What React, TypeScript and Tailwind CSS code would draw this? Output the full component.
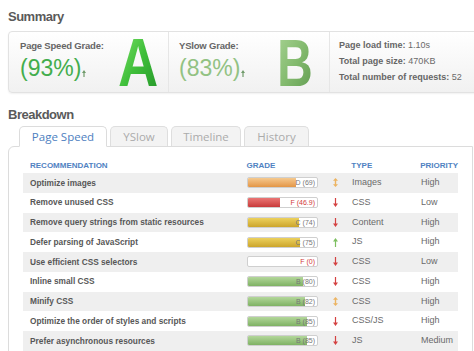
import React from 'react';

type Row = {
  name: string;
  grade: string;
  score: number;
  label: string;
  trend: 'up' | 'down' | 'both';
  type: string;
  priority: string;
};

const rows: Row[] = [
  { name: 'Optimize images', grade: 'D', score: 69, label: 'D (69)', trend: 'both', type: 'Images', priority: 'High' },
  { name: 'Remove unused CSS', grade: 'F', score: 46.9, label: 'F (46.9)', trend: 'down', type: 'CSS', priority: 'Low' },
  { name: 'Remove query strings from static resources', grade: 'C', score: 74, label: 'C (74)', trend: 'down', type: 'Content', priority: 'High' },
  { name: 'Defer parsing of JavaScript', grade: 'C', score: 75, label: 'C (75)', trend: 'up', type: 'JS', priority: 'High' },
  { name: 'Use efficient CSS selectors', grade: 'F', score: 0, label: 'F (0)', trend: 'down', type: 'CSS', priority: 'Low' },
  { name: 'Inline small CSS', grade: 'B', score: 80, label: 'B (80)', trend: 'down', type: 'CSS', priority: 'High' },
  { name: 'Minify CSS', grade: 'B', score: 82, label: 'B (82)', trend: 'both', type: 'CSS', priority: 'High' },
  { name: 'Optimize the order of styles and scripts', grade: 'B', score: 85, label: 'B (85)', trend: 'down', type: 'CSS/JS', priority: 'High' },
  { name: 'Prefer asynchronous resources', grade: 'B', score: 85, label: 'B (85)', trend: 'down', type: 'JS', priority: 'Medium' },
];

const fillClass: Record<string, string> = {
  D: 'bg-linear-to-b from-[#f5c98e] to-[#e39646]',
  F: 'bg-linear-to-b from-[#ea7575] to-[#c83a3a]',
  C: 'bg-linear-to-b from-[#ecd15c] to-[#cca52a]',
  B: 'bg-linear-to-b from-[#b3d79a] to-[#7fb264]',
};

// little trend arrows next to the grade bars
const Trend = ({ dir }: { dir: Row['trend'] }) => {
  if (dir === 'both')
    return (
      <svg width="5" height="9" viewBox="0 0 5 9">
        <path d="M2.5 0 L5 2.8 H3.2 V6.2 H5 L2.5 9 L0 6.2 H1.8 V2.8 H0 Z" fill="#ecb462" />
      </svg>
    );
  if (dir === 'up')
    return (
      <svg width="5" height="9" viewBox="0 0 5 9">
        <path d="M2.5 0 L5 3.6 H3.1 V9 H1.9 V3.6 H0 Z" fill="#7dbf60" />
      </svg>
    );
  return (
    <svg width="5" height="9" viewBox="0 0 5 9">
      <path d="M2.5 9 L5 5.4 H3.1 V0 H1.9 V5.4 H0 Z" fill="#d44242" />
    </svg>
  );
};

const SmallUp = () => (
  <svg width="4" height="7" viewBox="0 0 4 7" className="ml-[1px] mb-[4px]">
    <path d="M2 0 L4 3 H2.6 V7 H1.4 V3 H0 Z" fill="#6f9a6a" />
  </svg>
);

const App: React.FC = () => {
  return (
    <div className="w-[474px] h-[351px] overflow-hidden bg-white font-['Liberation_Sans',Arial,sans-serif] pl-2 pt-2">
      <h2 className="text-[13px] leading-[17px] font-bold tracking-[-0.5px] text-[#5a5a5a]">Summary</h2>

      {/* summary box */}
      <div className="mt-[6px] w-[475px] h-[62px] flex border border-[#e2e2e2] rounded-[4px] bg-linear-to-b from-[#ffffff] to-[#f1f1f1] shadow-[0_1px_2px_rgba(0,0,0,0.06)]">
        <div className="w-[160px] flex items-center pl-[11px] border-r border-[#e6e6e6]">
          <div className="w-[98px] self-start pt-[7.5px] flex flex-col">
            <span className="text-[9.5px] leading-[12px] font-bold text-[#666] tracking-[-0.2px]">Page Speed Grade:</span>
            <span className="mt-[3.5px] flex items-end text-[23px] leading-[26px] text-[#43ad4d]">
              (93%)<SmallUp />
            </span>
          </div>
          <span className="text-[68px] leading-none font-bold bg-linear-to-br from-[#7de46a] via-[#3fbf3a] to-[#24962a] bg-clip-text text-transparent scale-x-[0.82] origin-left">
            A
          </span>
        </div>
        <div className="w-[161px] flex items-center pl-[10px] border-r border-[#e6e6e6]">
          <div className="w-[98px] self-start pt-[7.5px] flex flex-col">
            <span className="text-[9.5px] leading-[12px] font-bold text-[#666] tracking-[-0.2px]">YSlow Grade:</span>
            <span className="mt-[3.5px] flex items-end text-[23px] leading-[26px] text-[#92c283]">
              (83%)<SmallUp />
            </span>
          </div>
          <span className="text-[67px] leading-none font-bold bg-linear-to-br from-[#a9d495] via-[#84bb6f] to-[#5f9a4f] bg-clip-text text-transparent scale-x-[0.74] origin-left">
            B
          </span>
        </div>
        <div className="pl-[9px] pt-[4.5px] flex flex-col text-[9px] leading-[16px] text-[#6a6a6a]">
          <span><b className="text-[#666]">Page load time:</b> 1.10s</span>
          <span><b className="text-[#666]">Total page size:</b> 470KB</span>
          <span><b className="text-[#666]">Total number of requests:</b> 52</span>
        </div>
      </div>

      <h2 className="mt-[12.5px] text-[13px] leading-[17px] font-bold tracking-[-0.5px] text-[#5a5a5a]">Breakdown</h2>

      {/* tabs */}
      <div className="mt-[3.5px] ml-[11px] flex gap-[3px] items-end font-['Open_Sans',sans-serif] text-[11.5px]">
        <div className="w-[88px] h-[21px] -mb-px flex items-center justify-center bg-white border border-b-white border-[#dcdcdc] rounded-t-[5px] text-[#4d80c0] relative z-10">
          Page Speed
        </div>
        <div className="w-[58px] h-[20px] flex items-center justify-center bg-[#f3f3f3] border border-b-0 border-[#dedede] rounded-t-[5px] text-[#ababab]">
          YSlow
        </div>
        <div className="w-[70px] h-[20px] flex items-center justify-center bg-[#f3f3f3] border border-b-0 border-[#dedede] rounded-t-[5px] text-[#ababab]">
          Timeline
        </div>
        <div className="w-[65px] h-[20px] flex items-center justify-center bg-[#f3f3f3] border border-b-0 border-[#dedede] rounded-t-[5px] text-[#ababab]">
          History
        </div>
      </div>

      {/* panel */}
      <div className="w-[465px] h-[220px] border border-[#dcdcdc] rounded-tl-[6px] px-[14px]">
        <div className="flex pl-[7px] pt-[14px] pb-[2px] text-[8px] leading-[10px] font-bold text-[#4f82c2]">
          <span className="w-[217px]">RECOMMENDATION</span>
          <span className="w-[105px]">GRADE</span>
          <span className="w-[69px]">TYPE</span>
          <span>PRIORITY</span>
        </div>
        {rows.map((r, i) => (
          <div
            key={r.name}
            className={`flex items-center h-[19.75px] pl-[7px] ${i % 2 === 0 ? 'bg-[#efefef]' : 'bg-white'}`}
          >
            <span className="w-[217px] text-[8.3px] font-bold text-[#575757]">{r.name}</span>
            <span className="w-[83px]">
              <span className="relative flex items-center justify-end w-[71px] h-[11px] border border-[#cfcfcf] bg-white rounded-[2px] overflow-hidden">
                <span
                  className={`absolute left-0 top-0 bottom-0 ${fillClass[r.grade]}`}
                  style={{ width: `${r.score}%` }}
                />
                <span className={`relative pr-[2px] text-[7px] leading-none ${r.grade === 'F' ? 'text-[#d23a3a]' : 'text-[#777]'}`}>
                  {r.label}
                </span>
              </span>
            </span>
            <span className="w-[22px] flex pl-[3px]">
              <Trend dir={r.trend} />
            </span>
            <span className="w-[69px] text-[9px] text-[#6a6a6a]">{r.type}</span>
            <span className="text-[9px] text-[#6a6a6a]">{r.priority}</span>
          </div>
        ))}
      </div>
    </div>
  );
};

export default App;
